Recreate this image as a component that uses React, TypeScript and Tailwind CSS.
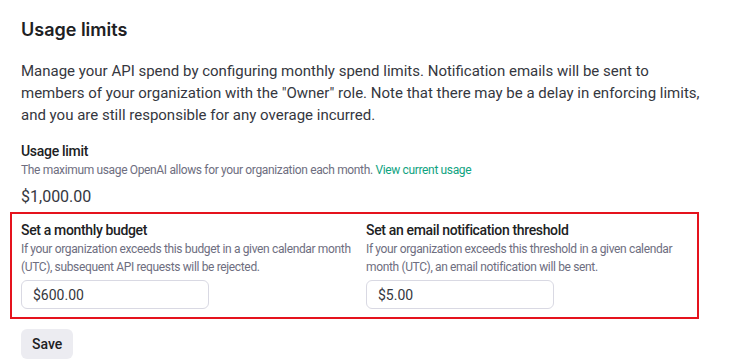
export default function App() {
  return (
    <div className="min-h-screen bg-white pl-[21px] pt-4 text-[#353740]" style={{ fontFamily: 'Roboto, "Noto Sans", sans-serif' }}>
      <h1
        className="text-[18px] font-semibold leading-7 text-[#202123]"
        style={{ fontFamily: 'Inter, Roboto, sans-serif' }}
      >
        Usage limits
      </h1>

      <p className="mt-4 w-[690px] text-[15px] leading-[22px]">
        Manage your API spend by configuring monthly spend limits. Notification emails will be sent to members of your
        organization with the "Owner" role. Note that there may be a delay in enforcing limits, and you are still
        responsible for any overage incurred.
      </p>

      <div className="mt-[15px]">
        <div className="text-[14px] font-medium leading-5 tracking-[-0.3px] text-[#202123]">Usage limit</div>
        <div className="text-[12px] leading-[18px] tracking-[-0.35px] text-[#6e6e80]">
          The maximum usage OpenAI allows for your organization each month.{' '}
          <a className="text-[#10a37f]">View current usage</a>
        </div>
        <div className="mt-[6px] text-[16px] leading-6">$1,000.00</div>
      </div>

      <div className="-ml-[11px] mt-[3px] grid w-[689px] grid-cols-[337px_322px] gap-x-2 border-2 border-[#e5131d] pb-2 pl-[9px] pr-[9px] pt-[6px]">
        <div>
          <div className="text-[14px] font-medium leading-5 tracking-[-0.35px] text-[#202123]">Set a monthly budget</div>
          <div className="text-[12px] leading-[18px] tracking-[-0.35px] text-[#6e6e80]">
            If your organization exceeds this budget in a given calendar month (UTC), subsequent API requests will be rejected.
          </div>
          <input
            defaultValue="$600.00"
            className="mt-1 h-[29px] w-[188px] rounded-md border border-[#d9d9e3] px-[11px] text-[14px] text-[#353740] outline-none"
          />
        </div>
        <div>
          <div className="text-[14px] font-medium leading-5 tracking-[-0.35px] text-[#202123]">Set an email notification threshold</div>
          <div className="text-[12px] leading-[18px] tracking-[-0.35px] text-[#6e6e80]">
            If your organization exceeds this threshold in a given calendar month (UTC), an email notification will be sent.
          </div>
          <input
            defaultValue="$5.00"
            className="mt-1 h-[29px] w-[188px] rounded-md border border-[#d9d9e3] px-[11px] text-[14px] text-[#353740] outline-none"
          />
        </div>
      </div>

      <button className="mt-[10px] h-[30px] rounded-md bg-[#ececf1] px-[11px] text-[14px] font-medium text-[#202123]">
        Save
      </button>
    </div>
  );
}
